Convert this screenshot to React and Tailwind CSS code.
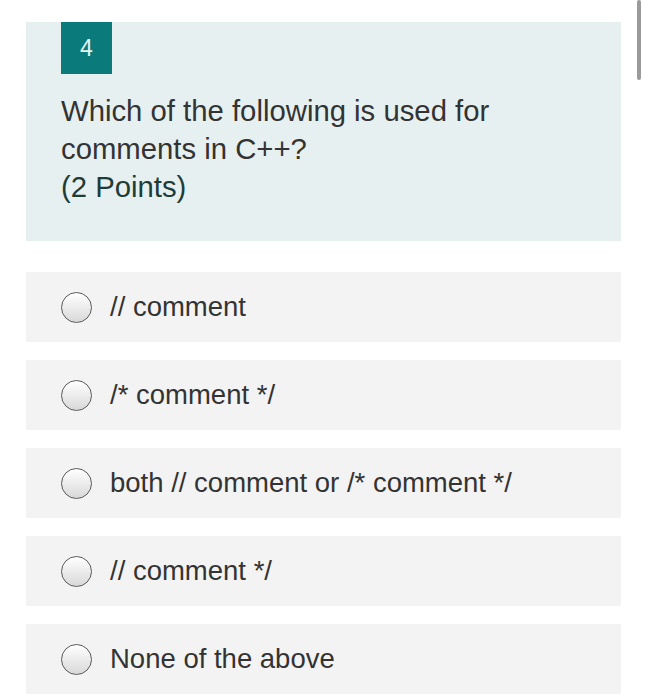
import React from 'react';

const options = [
  '// comment',
  '/* comment */',
  'both // comment or /* comment */',
  '// comment */',
  'None of the above',
];

function Radio() {
  return (
    <span className="w-[31px] h-[31px] shrink-0 rounded-full border-[1.5px] border-[#5a5a5a] bg-gradient-to-b from-white to-[#d9d9d9]" />
  );
}

export default function App() {
  return (
    <div className="relative w-[649px] h-[700px] bg-white overflow-hidden font-['Liberation_Sans',Arial,sans-serif]">
      <div className="absolute right-[8px] top-0 w-[4px] h-[80px] rounded-full bg-[#9a9a9a]" />
      <div className="pt-[22px] pl-[26px] pr-[28px]">
        <div className="bg-[#e7f0f1] pl-[35px] pr-6 pb-[35px]">
          <div className="w-[51px] h-[52px] bg-[#0b7a7a] text-[#e8f4f4] text-[23px] flex items-center justify-center">
            4
          </div>
          <div className="mt-[18px] text-[29.3px] leading-[38px] text-[#333333]">
            <p>Which of the following is used for</p>
            <p>comments in C++?</p>
            <p className="text-[#1d3d38]">(2 Points)</p>
          </div>
        </div>
        <div className="mt-[31px] flex flex-col gap-[18px]">
          {options.map((o) => (
            <div key={o} className="h-[70px] bg-[#f3f3f3] pl-[35px] flex items-center gap-[18px]">
              <Radio />
              <span className="text-[27.5px] text-[#333333]">{o}</span>
            </div>
          ))}
        </div>
      </div>
    </div>
  );
}
